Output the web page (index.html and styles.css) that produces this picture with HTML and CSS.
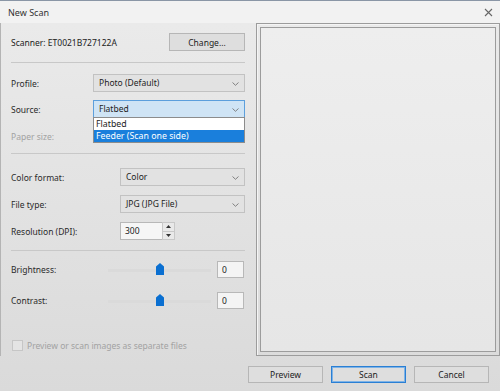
FILE: index.html
```html
<!DOCTYPE html>
<html lang="en">
<head>
  <meta charset="UTF-8">
  <title>New Scan</title>
  <link rel="stylesheet" href="styles.css">
</head>
<body>

<div class="window">

  <div class="titlebar">
    <span class="title">New Scan</span>
    <svg class="close" width="9" height="9" viewBox="0 0 9 9"><path d="M1 1L8 8M8 1L1 8" stroke="#666" stroke-width="1.1"/></svg>
  </div>

  <div class="main">
    <div class="settings">

      <div class="row">
        <span class="scanner">Scanner: ET0021B727122A</span>
        <button class="btn change">Change...</button>
      </div>

      <div class="sep sep-1"></div>

      <div class="row field profile">
        <span class="label">Profile:</span>
        <div class="select wide">Photo (Default)
          <svg class="chev" width="7" height="4" viewBox="0 0 7 4"><path d="M0.5 0.5L3.5 3.3L6.5 0.5" fill="none" stroke="#777" stroke-width="0.9"/></svg>
        </div>
      </div>

      <div class="row field source">
        <span class="label">Source:</span>
        <div class="select wide active">Flatbed
          <svg class="chev" width="7" height="4" viewBox="0 0 7 4"><path d="M0.5 0.5L3.5 3.3L6.5 0.5" fill="none" stroke="#777" stroke-width="0.9"/></svg>
          <ul class="options">
            <li>Flatbed</li>
            <li class="on">Feeder (Scan one side)</li>
          </ul>
        </div>
      </div>

      <div class="row field paper">
        <span class="label muted">Paper size:</span>
      </div>

      <div class="sep sep-2"></div>

      <div class="row field color">
        <span class="label">Color format:</span>
        <div class="select narrow">Color
          <svg class="chev" width="7" height="4" viewBox="0 0 7 4"><path d="M0.5 0.5L3.5 3.3L6.5 0.5" fill="none" stroke="#777" stroke-width="0.9"/></svg>
        </div>
      </div>

      <div class="row field filetype">
        <span class="label">File type:</span>
        <div class="select narrow">JPG (JPG File)
          <svg class="chev" width="7" height="4" viewBox="0 0 7 4"><path d="M0.5 0.5L3.5 3.3L6.5 0.5" fill="none" stroke="#777" stroke-width="0.9"/></svg>
        </div>
      </div>

      <div class="row field resolution">
        <span class="label">Resolution (DPI):</span>
        <div class="spin">
          <span class="spin-value">300</span>
          <span class="spin-btns">
            <span class="spin-btn"><svg width="5" height="3" viewBox="0 0 5 3"><path d="M0 3L2.5 0L5 3Z" fill="#333"/></svg></span>
            <span class="spin-btn"><svg width="5" height="3" viewBox="0 0 5 3"><path d="M0 0L2.5 3L5 0Z" fill="#333"/></svg></span>
          </span>
        </div>
      </div>

      <div class="sep sep-3"></div>

      <div class="row slider-row brightness">
        <span class="label">Brightness:</span>
        <div class="track">
          <svg class="thumb" width="8" height="12" viewBox="0 0 8 12"><path d="M0 3.5L4 0L8 3.5V12H0Z" fill="#0a6fd1"/></svg>
        </div>
        <span class="value">0</span>
      </div>

      <div class="row slider-row contrast">
        <span class="label">Contrast:</span>
        <div class="track">
          <svg class="thumb" width="8" height="12" viewBox="0 0 8 12"><path d="M0 3.5L4 0L8 3.5V12H0Z" fill="#0a6fd1"/></svg>
        </div>
        <span class="value">0</span>
      </div>

      <div class="row check-row">
        <span class="checkbox"></span>
        <span class="muted">Preview or scan images as separate files</span>
      </div>

    </div>

    <div class="preview-frame">
      <div class="preview-inner"></div>
    </div>
  </div>

  <div class="footer">
    <button class="btn">Preview</button>
    <button class="btn primary">Scan</button>
    <button class="btn">Cancel</button>
  </div>

</div>

</body>
</html>
```

FILE: styles.css
```css
body {
  margin: 0;
  font-family: 'Noto Sans', 'Open Sans', sans-serif;
  font-size: 8.5px;
  color: #222;
  background: #e4e4e4;
}

.window {
  width: 500px;
  height: 391px;
  display: flex;
  flex-direction: column;
  background: linear-gradient(#ebebeb, #dadada);
  border-top: 1px solid #8a96a6;
  box-sizing: border-box;
  overflow: hidden;
}

.titlebar {
  height: 22px;
  flex: none;
  display: flex;
  align-items: center;
  justify-content: space-between;
  padding: 0 7px 0 8px;
  background: #f2f2f2;
  font-size: 9px;
  color: #333;
}

.close {
  margin-top: 1px;
}

.main {
  height: 333px;
  flex: none;
  display: flex;
}

.settings {
  width: 256px;
  flex: none;
  box-sizing: border-box;
  padding: 10px 11px 0 10px;
  border-left: 1px solid #b4b4b4;
}

.row {
  display: flex;
  align-items: center;
  height: 18px;
  position: relative;
}

.scanner {
  flex: 1;
  color: #222;
}

.btn {
  font: inherit;
  color: #222;
  height: 18px;
  width: 76px;
  padding: 0;
  background: #dedede;
  border: 1px solid #b6b6b6;
}

.sep {
  height: 1px;
  background: #c8c8c8;
}

.sep-1 { margin: 11px 0 11px; }
.sep-2 { margin: 8px 0 14px; }
.sep-3 { margin: 10px 0 10px; }

.field + .field {
  margin-top: 8px;
}

.paper,
.color + .filetype,
.filetype + .resolution {
  margin-top: 9px !important;
}

.label {
  flex: 1;
  color: #2a2a2a;
}

.muted {
  color: #a2a2a2;
}

.select {
  position: relative;
  height: 18px;
  box-sizing: border-box;
  padding: 0 0 0 5px;
  line-height: 16px;
  background: #e2e2e2;
  border: 1px solid #c2c2c2;
  color: #222;
}

.select.wide { width: 152px; }
.select.narrow { width: 125px; }

.select.active {
  background: #cfe4f5;
  border-color: #5c9fdc;
}

.chev {
  position: absolute;
  right: 5px;
  top: 7px;
}

.options {
  position: absolute;
  left: -1px;
  top: 16px;
  width: 152px;
  margin: 0;
  padding: 0;
  list-style: none;
  background: #fff;
  border: 1px solid #8c8c8c;
  box-sizing: border-box;
  z-index: 2;
}

.options li {
  height: 12px;
  line-height: 12px;
  padding-left: 2px;
  font-size: 8.8px;
}

.options li.on {
  background: #1a7fdc;
  color: #fff;
}

.spin {
  width: 55px;
  height: 18px;
  display: flex;
  margin-right: 70px;
}

.spin-value {
  flex: 1;
  background: #f6f6f6;
  border: 1px solid #b8b8b8;
  border-right: none;
  padding-left: 4px;
  line-height: 16px;
}

.spin-btns {
  width: 13px;
  display: flex;
  flex-direction: column;
  gap: 1px;
  background: #c8c8c8;
  padding: 1px;
  box-sizing: border-box;
}

.spin-btn {
  flex: 1;
  background: #e9e9e9;
  display: flex;
  align-items: center;
  justify-content: center;
}

.slider-row {
  height: 17px;
}

.contrast { margin-top: 14px; }

.slider-row .label {
  flex: none;
  width: 97px;
}

.track {
  position: relative;
  width: 103px;
  height: 3px;
  background: #dadada;
  margin-top: 1px;
}

.thumb {
  position: absolute;
  left: 48px;
  top: -6px;
}

.value {
  margin-left: 6px;
  width: 27px;
  height: 17px;
  box-sizing: border-box;
  border: 1px solid #b8b8b8;
  background: #f4f4f4;
  padding-left: 4px;
  line-height: 15px;
}

.check-row {
  margin-top: 30px;
  height: 12px;
  gap: 4px;
}

.checkbox {
  width: 9px;
  height: 9px;
  margin-left: 1px;
  border: 1px solid #c6c6c6;
  background: #e4e4e4;
}

.preview-frame {
  width: 244px;
  height: 333px;
  box-sizing: border-box;
  border: 1px solid #9c9c9c;
  box-shadow: inset 1px 1px 0 #f4f4f4;
  padding: 3px;
}

.preview-inner {
  height: 100%;
  box-sizing: border-box;
  border: 1px solid #9c9c9c;
  background: linear-gradient(#eeeeee, #e6e6e6);
}

.footer {
  display: flex;
  justify-content: flex-end;
  gap: 8px;
  padding: 10px 11px 0 0;
}

.footer .btn {
  width: 75px;
  height: 17px;
}

.btn.primary {
  border: 1px solid #2a7fd4;
  box-shadow: inset 0 0 0 1px #7fb3e6;
}
```
